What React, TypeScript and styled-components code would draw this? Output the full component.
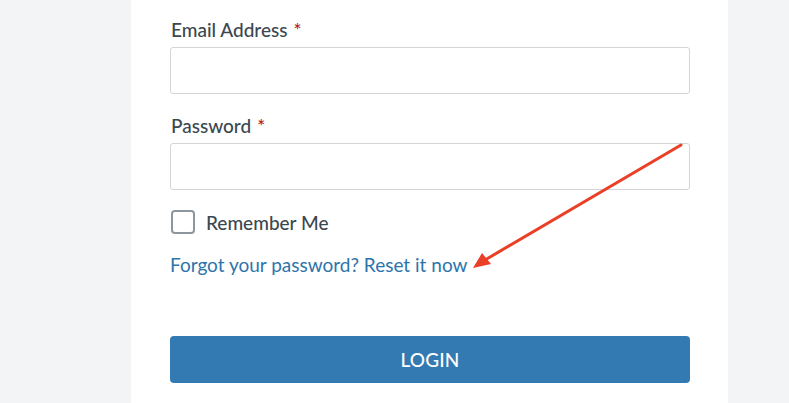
import React from 'react'
import styled, { createGlobalStyle } from 'styled-components'

const GlobalStyle = createGlobalStyle`
    html, body {
        margin: 0;
        padding: 0;
        background: #f3f4f6;
        font-family: Lato, "Liberation Sans", sans-serif;
    }
    * {
        box-sizing: border-box;
    }
`;

const Page = styled.div`
    display: flex;
    justify-content: flex-start;
    height: 403px;
    overflow: hidden;
    padding-left: 131px;
`;

const Panel = styled.form`
    position: relative;
    width: 597px;
    height: 100%;
    background: #ffffff;
    padding: 18px 38px 0 39px;
    display: flex;
    flex-direction: column;
`;

const Field = styled.div<{ $gap: number }>`
    display: flex;
    flex-direction: column;
    margin-bottom: ${(p) => p.$gap}px;
`;

const Label = styled.label`
    font-size: 19px;
    font-weight: 500;
    color: #3b4850;
    line-height: 24px;
    margin: 0 0 5px 1px;
`;

const Required = styled.span`
    color: #b8212b;
    margin-left: 6px;
`;

const Input = styled.input`
    width: 520px;
    height: 47px;
    border: 1px solid #d3d5d9;
    border-radius: 3px;
    background: #fff;
    font-size: 16px;
    padding: 0 12px;
    outline: none;
`;

const CheckRow = styled.label`
    display: flex;
    align-items: center;
    gap: 11px;
    margin-left: 1px;
    cursor: pointer;
`;

const Box = styled.span`
    width: 24px;
    height: 24px;
    border: 2px solid #8e969d;
    border-radius: 4px;
    background: #fff;
`;

const CheckText = styled.span`
    font-size: 19px;
    font-weight: 500;
    color: #3b4850;
`;

const Link = styled.a`
    margin-top: 19px;
    font-size: 19px;
    color: #2e74ab;
    text-decoration: none;
    line-height: 24px;
`;

const Button = styled.button`
    margin-top: 59px;
    width: 520px;
    height: 47px;
    border: none;
    border-radius: 4px;
    background: #337ab2;
    color: #fff;
    font-family: inherit;
    font-size: 19px;
    font-weight: 500;
    letter-spacing: 0.2px;
`;

const Arrow = styled.svg`
    position: absolute;
    left: 0;
    top: 0;
    pointer-events: none;
`;

const App: React.FC = () => {
    return (
        <>
            <GlobalStyle />
            <Page>
                <Panel onSubmit={(e) => e.preventDefault()}>
                    <Field $gap={20}>
                        <Label>
                            Email Address<Required>*</Required>
                        </Label>
                        <Input type="email" />
                    </Field>
                    <Field $gap={20}>
                        <Label>
                            Password<Required>*</Required>
                        </Label>
                        <Input type="password" />
                    </Field>
                    <CheckRow>
                        <Box />
                        <CheckText>Remember Me</CheckText>
                    </CheckRow>
                    <Link href="#">Forgot your password? Reset it now</Link>
                    <Button type="submit">LOGIN</Button>
                    <Arrow width="597" height="403" viewBox="0 0 597 403">
                        <line x1="550" y1="145" x2="354" y2="260" stroke="#ea4027" strokeWidth="3" strokeLinecap="round" />
                        <polygon points="342,268 351,253 360,264" fill="#ea4027" />
                    </Arrow>
                </Panel>
            </Page>
        </>
    )
}

export default App
